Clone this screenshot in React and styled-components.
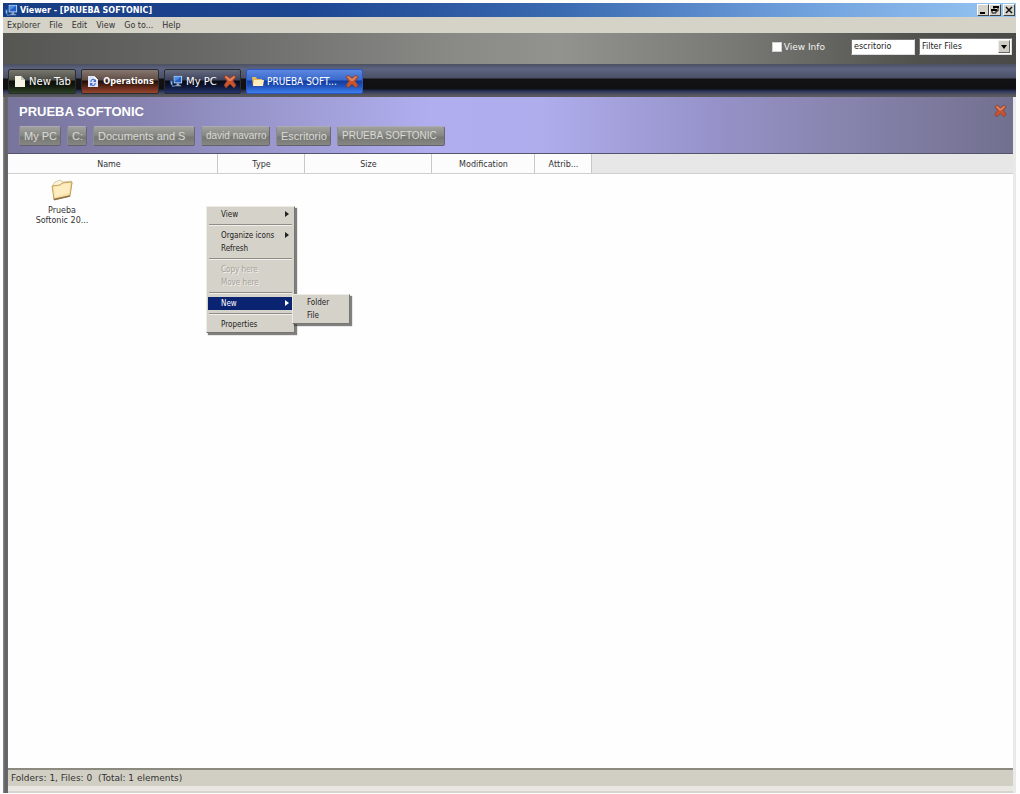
import styled, { createGlobalStyle } from "styled-components";

const GlobalStyle = createGlobalStyle`
  * {
    box-sizing: border-box;
  }

  body {
    margin: 0;
    background: #fdfdfd;
    color: #222;
    font-family: "DejaVu Sans", sans-serif;
    font-size: 8px;
  }

  button,
  input,
  select {
    font-family: inherit;
    font-size: inherit;
  }
`;

const Window = styled.div`
  display: flex;
  flex-direction: column;
  min-height: 100vh;
  padding: 3px 4px 1px 3px;
`;

const TitleBar = styled.header`
  display: flex;
  align-items: center;
  gap: 2px;
  height: 14px;
  padding: 0 1px 0 2px;
  color: white;
  background: linear-gradient(
    90deg,
    #173d83 0%,
    #1d4692 30%,
    #3a6ab0 55%,
    #6f9fdb 78%,
    #96c6f2 100%
  );
`;

const WindowTitle = styled.h1`
  flex: 1;
  margin: 0;
  font-size: 8px;
  font-weight: bold;
  white-space: nowrap;
`;

const WindowButtons = styled.div`
  display: flex;
`;

const WindowButton = styled.button`
  display: flex;
  align-items: center;
  justify-content: center;
  width: 12px;
  height: 12px;
  padding: 0;
  margin-left: ${(props) => (props.$apart ? "2px" : "0")};
  background: #d6d3ca;
  border: 1px solid;
  border-color: #fff #444 #444 #fff;
`;

const MenuBar = styled.nav`
  display: flex;
  align-items: center;
  gap: 9px;
  height: 16px;
  padding: 0 4px;
  background: #d5d2c7;
`;

const MenuButton = styled.button`
  padding: 0;
  border: none;
  background: none;
  color: #333;
  white-space: nowrap;
`;

const Toolbar = styled.div`
  display: flex;
  align-items: center;
  justify-content: flex-end;
  height: 31px;
  padding: 0 4px 4px;
  background: linear-gradient(
    90deg,
    #555552 0%,
    #666664 18%,
    #8a8b87 45%,
    #92938f 55%,
    #777774 73%,
    #51514e 90%,
    #4a4a48 100%
  );
`;

const CheckLabel = styled.label`
  display: flex;
  align-items: center;
  gap: 2px;
  margin-right: 26px;
  color: #f4f4f0;
  font-size: 9px;
`;

const Checkbox = styled.input`
  appearance: none;
  width: 10px;
  height: 10px;
  margin: 0;
  background: white;
  border: 1px solid #d0d0cc;
`;

const SearchBox = styled.input`
  width: 64px;
  height: 16px;
  margin-right: 4px;
  padding: 0 2px;
  color: #222;
  background: white;
  border: 1px solid;
  border-color: #777 #ddd #ddd #777;
  border-radius: 0;
`;

const SelectWrap = styled.div`
  position: relative;
  width: 93px;
  height: 17px;
`;

const Select = styled.select`
  appearance: none;
  width: 100%;
  height: 100%;
  padding: 0 16px 0 2px;
  color: #222;
  background: white;
  border: 1px solid;
  border-color: #777 #ddd #ddd #777;
  border-radius: 0;
`;

const SelectArrow = styled.span`
  position: absolute;
  top: 2px;
  right: 2px;
  display: flex;
  align-items: center;
  justify-content: center;
  width: 12px;
  height: 13px;
  pointer-events: none;
  background: #d0cdc5;
  border: 1px solid;
  border-color: #eee #666 #666 #eee;
`;

const TabStrip = styled.div`
  display: flex;
  align-items: center;
  gap: 5px;
  height: 33px;
  padding: 1px 5px 0;
  background: linear-gradient(
    180deg,
    #4c5062 0px,
    #5d6480 5px,
    #4b5066 14px,
    #121214 15px,
    #101012 25px,
    #1e2748 26px,
    #363d60 28px,
    #56575c 31px,
    #5c5c60 33px
  );
`;

const tabBackgrounds = {
  green:
    "linear-gradient(180deg, #77776f 0, #4c4d46 10px, #0c0e09 11px, #121a0e 16px, #2c4226 100%)",
  red: "linear-gradient(180deg, #85776f 0, #604c45 10px, #1e0d08 11px, #552417 16px, #99462f 100%)",
  navy: "linear-gradient(180deg, #666b80 0, #3c425a 10px, #080a14 11px, #0e1532 16px, #24346c 100%)",
  blue: "linear-gradient(180deg, #5c88e0 0, #3a68cc 10px, #123c9e 11px, #1f50b8 16px, #3f80ee 100%)",
};

const Tab = styled.button`
  display: flex;
  align-items: center;
  gap: 3px;
  width: ${(props) => props.$width}px;
  height: 25px;
  padding: 0 3px 0 5px;
  color: white;
  font-size: 10px;
  text-align: left;
  white-space: nowrap;
  background: ${(props) => tabBackgrounds[props.$tone]};
  border: 1px solid ${(props) => (props.$tone === "blue" ? "#2a57c0" : "#2b2c30")};
  border-radius: 2px;

  svg {
    flex: none;
  }
`;

const TabText = styled.span`
  flex: 1;
  font-family: ${(props) =>
    props.$condensed ? '"DejaVu Sans Condensed", "DejaVu Sans", sans-serif' : "inherit"};
  font-size: ${(props) => (props.$bold ? "9px" : "10px")};
  font-weight: ${(props) => (props.$bold ? "bold" : "normal")};
  text-align: ${(props) => props.$align || "left"};
`;

const Body = styled.main`
  display: flex;
  flex: 1;
  flex-direction: column;
  padding: 0 3px 0 5px;
  background: linear-gradient(
    90deg,
    #8d8d8d 0px,
    #626266 2px,
    #68686c 5px,
    #e9e9e9 5px
  );
`;

const FolderHeader = styled.section`
  height: 57px;
  padding: 7px 6px 7px 11px;
  background: linear-gradient(
    90deg,
    #77759c 0%,
    #8582b0 13%,
    #9c99d0 27%,
    #b0aeef 42%,
    #afadec 53%,
    #9995ce 68%,
    #8784ae 83%,
    #72708f 100%
  );
  border-bottom: 1px solid #56546a;
`;

const HeaderRow = styled.div`
  display: flex;
  align-items: flex-start;
  justify-content: space-between;
  height: 22px;
`;

const FolderTitle = styled.h2`
  margin: 0;
  color: white;
  font-family: "Liberation Sans", Arial, sans-serif;
  font-size: 13px;
  line-height: 15px;
`;

const IconButton = styled.button`
  display: flex;
  padding: 0;
  border: none;
  background: none;
`;

const Crumbs = styled.nav`
  display: flex;
  gap: 6px;
`;

const Crumb = styled.button`
  width: ${(props) => props.$width}px;
  height: 20px;
  padding: 0 4px;
  color: #d9dad5;
  font-family: "Liberation Sans", Arial, sans-serif;
  font-size: ${(props) => (props.$small ? "10px" : "11px")};
  line-height: 18px;
  text-align: left;
  white-space: nowrap;
  background: linear-gradient(180deg, #a0a19d 0, #858681 9px, #767772 10px, #868782 100%);
  border: 1px solid;
  border-color: #aaa9b4 #696872 #62616b #8a8996;
  border-radius: 2px;
`;

const FileTable = styled.table`
  width: 100%;
  table-layout: fixed;
  border-collapse: collapse;
`;

const ColumnHead = styled.th`
  width: ${(props) => (props.$width ? props.$width + "px" : "auto")};
  height: 19px;
  padding: 3px 8px 0 0;
  color: #333;
  font-weight: normal;
  text-align: center;
  background: ${(props) => (props.$empty ? "#e7e7e7" : "#fcfcfd")};
  border-bottom: 1px solid #cfcfd2;
  box-shadow: ${(props) => (props.$empty ? "none" : "inset -1px 0 #c8c8cc")};

  & + & {
    padding-right: 0;
  }
`;

const Listing = styled.section`
  position: relative;
  flex: 1;
  padding: 5px 23px;
  background: #fefefe;
`;

const FileItem = styled.a`
  display: flex;
  flex-direction: column;
  align-items: center;
  gap: 5px;
  width: 62px;
  color: #333;
  line-height: 10px;
  text-align: center;
  text-decoration: none;
`;

const Menu = styled.div`
  position: absolute;
  top: ${(props) => props.$top}px;
  left: ${(props) => props.$left}px;
  width: ${(props) => props.$width}px;
  padding: 1px;
  font-family: "DejaVu Sans Condensed", "DejaVu Sans", sans-serif;
  background: #d5d2c9;
  border: 1px solid;
  border-color: #ecebe6 #77756f #77756f #ecebe6;
  box-shadow: 2px 2px 1px rgba(60, 60, 60, 0.65);
`;

const MenuItem = styled.button`
  display: flex;
  align-items: center;
  justify-content: space-between;
  width: 100%;
  height: 13px;
  padding: 0 4px 0 13px;
  border: none;
  white-space: nowrap;
  color: ${(props) => (props.$active ? "#fff" : "#222")};
  background: ${(props) => (props.$active ? "#0b2471" : "transparent")};

  &:disabled {
    color: #a4a29b;
    text-shadow: 1px 1px #f2f1ed;
  }
`;

const Separator = styled.hr`
  height: 2px;
  margin: 3px 1px;
  border: none;
  border-top: 1px solid #8f8d86;
  border-bottom: 1px solid #f0efeb;
`;

const StatusBar = styled.footer`
  display: flex;
  align-items: center;
  height: 18px;
  padding: 0 3px;
  color: #333;
  font-size: 9px;
  background: #d1cfc3;
  border-top: 2px solid #8a8a80;
`;

const BottomEdge = styled.div`
  height: 7px;
  background: #e9e7e1;
  border-bottom: 2px solid #d6d4ce;
`;

function ComputerIcon({ size = 13 }) {
  return (
    <svg width={size} height={size} viewBox="0 0 14 14" aria-hidden="true">
      <path d="M4 1h9v8H4z" fill="#b9d4f5" />
      <path d="M5 2h7v6H5z" fill="#235fc4" />
      <path d="M5 2h7L5 7z" fill="#4b8de5" />
      <path d="M7 9h3v2h2v1H5v-1h2z" fill="#93a9c9" />
      <path d="M0 6h3v5H1zM2 11h3v2H2z" fill="#3e70b8" />
      <path d="M1 7h1v3H1z" fill="#a7c7ee" />
    </svg>
  );
}

function PageIcon({ sync }) {
  return (
    <svg width="12" height="13" viewBox="0 0 12 13" aria-hidden="true">
      <path d="M1 1h6l4 4v7H1z" fill="#f5f3e5" />
      <path d="M7 1v4h4z" fill="#c9c6b5" />
      {sync && (
        <>
          <path d="M1 1h6l4 4v7H1z" fill="#dde5fa" />
          <path d="M7 1v4h4z" fill="#fff" />
          <path
            d="M4 7a2 2 0 0 1 4-1M8 8a2 2 0 0 1-4 1"
            fill="none"
            stroke="#4968c8"
            strokeWidth="1.2"
          />
          <path d="M9 4v3H6zM3 11V8h3z" fill="#4968c8" />
        </>
      )}
    </svg>
  );
}

function SmallFolderIcon() {
  return (
    <svg width="12" height="12" viewBox="0 0 12 12" aria-hidden="true">
      <path d="M0 2h4l1 2h5v7H1z" fill="#e9b958" />
      <path d="M2 5h10l-1 6H1z" fill="#ffedbd" />
    </svg>
  );
}

function FolderIcon() {
  return (
    <svg width="22" height="22" viewBox="0 0 22 22" aria-hidden="true">
      <path d="M2 6l2-3 5-2 3 2 8-1 1 2-2 12-16 3z" fill="#fbf3d8" stroke="#cdbf98" strokeWidth=".8" />
      <path d="M1 7l8-1 2-2 10-1-2 14-16 4z" fill="#f7dfa0" stroke="#b5904e" strokeWidth=".8" />
      <path d="M3 8l7-1 2-2 7-1-1 10-14 4z" fill="#fdedc0" />
      <path d="M3 20.500l16-3.500" stroke="#8b6e42" strokeWidth="1.500" />
    </svg>
  );
}

function CloseIcon({ size = 14 }) {
  return (
    <svg width={size} height={size} viewBox="0 0 14 14" aria-hidden="true">
      <path
        d="M1 3l2-2 4 3 4-3 2 2-3 4 3 4-2 3-4-4-4 4-2-3 3-4z"
        fill="#c9522f"
        stroke="#7d3f2b"
        strokeWidth=".7"
      />
      <path d="M2 3l1-1 4 3 4-3 1 1-4 4H6z" fill="#de8560" />
    </svg>
  );
}

function Arrow() {
  return (
    <svg width="4" height="6" viewBox="0 0 4 6" aria-hidden="true">
      <path d="M0 0l4 3-4 3z" fill="currentColor" />
    </svg>
  );
}

const menus = ["Explorer", "File", "Edit", "View", "Go to...", "Help"];

const crumbs = [
  { name: "My PC", width: 42 },
  { name: "C:", width: 20 },
  { name: "Documents and S", width: 102 },
  { name: "david navarro", width: 69, small: true },
  { name: "Escritorio", width: 55 },
  { name: "PRUEBA SOFTONIC", width: 108, small: true },
];

export default function App() {
  return (
    <>
      <GlobalStyle />
      <Window>
        <TitleBar>
          <ComputerIcon />
          <WindowTitle>Viewer - [PRUEBA SOFTONIC]</WindowTitle>
          <WindowButtons>
            <WindowButton aria-label="Minimize">
              <svg width="8" height="8" viewBox="0 0 8 8">
                <path d="M1 6h5v2H1z" />
              </svg>
            </WindowButton>
            <WindowButton aria-label="Restore">
              <svg width="8" height="8" viewBox="0 0 8 8">
                <path d="M3 3V1h4v4H5M1 4h4v3H1z" fill="none" stroke="#111" />
                <path d="M2 0h6v2H2zM0 3h6v2H0z" />
              </svg>
            </WindowButton>
            <WindowButton aria-label="Close" $apart>
              <svg width="8" height="8" viewBox="0 0 8 8">
                <path d="M1 1l6 6M7 1L1 7" stroke="#111" strokeWidth="1.5" />
              </svg>
            </WindowButton>
          </WindowButtons>
        </TitleBar>

        <MenuBar>
          {menus.map((name) => (
            <MenuButton key={name}>{name}</MenuButton>
          ))}
        </MenuBar>

        <Toolbar>
          <CheckLabel>
            <Checkbox type="checkbox" />
            View Info
          </CheckLabel>
          <SearchBox aria-label="Search" defaultValue="escritorio" />
          <SelectWrap>
            <Select aria-label="Filter">
              <option>Filter Files</option>
            </Select>
            <SelectArrow>
              <svg width="6" height="4" viewBox="0 0 6 4">
                <path d="M0 0h6L3 4z" />
              </svg>
            </SelectArrow>
          </SelectWrap>
        </Toolbar>

        <TabStrip>
          <Tab $tone="green" $width={68}>
            <PageIcon />
            <TabText>New Tab</TabText>
          </Tab>
          <Tab $tone="red" $width={78}>
            <PageIcon sync />
            <TabText $condensed $bold $align="center">
              Operations
            </TabText>
          </Tab>
          <Tab $tone="navy" $width={77}>
            <ComputerIcon />
            <TabText>My PC</TabText>
            <CloseIcon />
          </Tab>
          <Tab $tone="blue" $width={117}>
            <SmallFolderIcon />
            <TabText $condensed>PRUEBA SOFT...</TabText>
            <CloseIcon />
          </Tab>
        </TabStrip>

        <Body>
          <FolderHeader>
            <HeaderRow>
              <FolderTitle>PRUEBA SOFTONIC</FolderTitle>
              <IconButton aria-label="Close folder">
                <CloseIcon size={13} />
              </IconButton>
            </HeaderRow>
            <Crumbs>
              {crumbs.map((crumb) => (
                <Crumb key={crumb.name} $width={crumb.width} $small={crumb.small}>
                  {crumb.name}
                </Crumb>
              ))}
            </Crumbs>
          </FolderHeader>

          <FileTable>
            <thead>
              <tr>
                <ColumnHead $width={210}>Name</ColumnHead>
                <ColumnHead $width={87}>Type</ColumnHead>
                <ColumnHead $width={127}>Size</ColumnHead>
                <ColumnHead $width={103}>Modification</ColumnHead>
                <ColumnHead $width={57}>Attrib...</ColumnHead>
                <ColumnHead as="td" $empty />
              </tr>
            </thead>
          </FileTable>

          <Listing>
            <FileItem href="#folder">
              <FolderIcon />
              <span>
                Prueba
                <br />
                Softonic 20...
              </span>
            </FileItem>

            <Menu $top={32} $left={198} $width={89}>
              <MenuItem>
                View <Arrow />
              </MenuItem>
              <Separator />
              <MenuItem>
                Organize icons <Arrow />
              </MenuItem>
              <MenuItem>Refresh</MenuItem>
              <Separator />
              <MenuItem disabled>Copy here</MenuItem>
              <MenuItem disabled>Move here</MenuItem>
              <Separator />
              <MenuItem $active>
                New <Arrow />
              </MenuItem>
              <Separator />
              <MenuItem>Properties</MenuItem>
            </Menu>
            <Menu $top={120} $left={284} $width={58}>
              <MenuItem>Folder</MenuItem>
              <MenuItem>File</MenuItem>
            </Menu>
          </Listing>

          <StatusBar>Folders: 1, Files: 0&nbsp; (Total: 1 elements)</StatusBar>
          <BottomEdge />
        </Body>
      </Window>
    </>
  );
}
